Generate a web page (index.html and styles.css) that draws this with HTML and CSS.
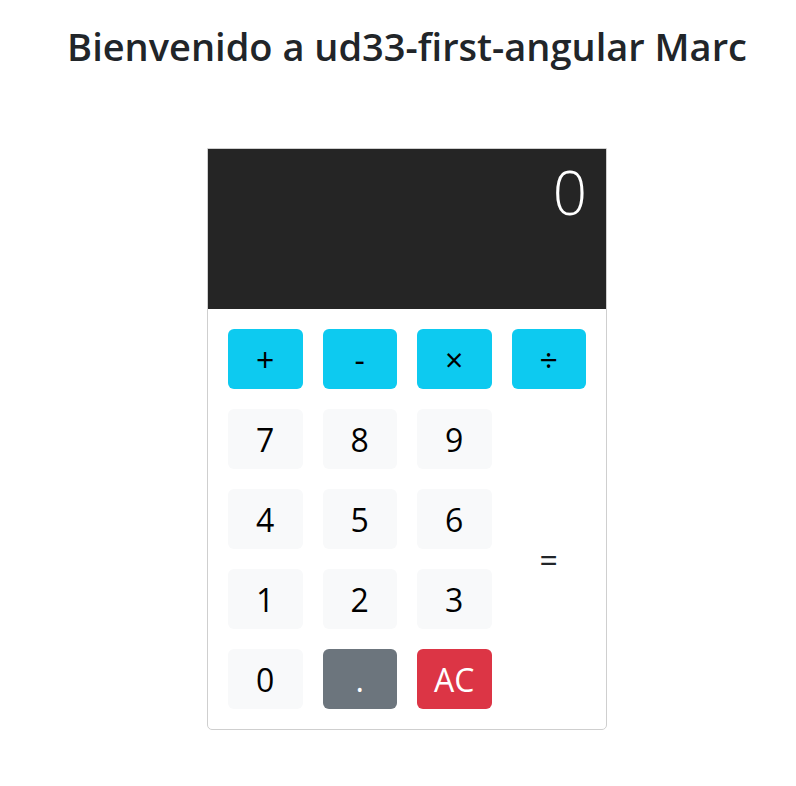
FILE: index.html
```html
<!DOCTYPE html>
<html lang="es">
<head>
<meta charset="utf-8">
<title>Ud33FirstAngular</title>
<link rel="stylesheet" href="styles.css">
</head>
<body>
<main class="page">
  <h1 class="title">Bienvenido a ud33-first-angular Marc</h1>
  <div class="calculator">
    <div class="display">0</div>
    <div class="keys">
      <button class="key key-op">+</button>
      <button class="key key-op">-</button>
      <button class="key key-op">×</button>
      <button class="key key-op">÷</button>
      <button class="key key-num">7</button>
      <button class="key key-num">8</button>
      <button class="key key-num">9</button>
      <button class="key key-equal">=</button>
      <button class="key key-num">4</button>
      <button class="key key-num">5</button>
      <button class="key key-num">6</button>
      <button class="key key-num">1</button>
      <button class="key key-num">2</button>
      <button class="key key-num">3</button>
      <button class="key key-num">0</button>
      <button class="key key-dot">.</button>
      <button class="key key-clear">AC</button>
    </div>
  </div>
</main>
</body>
</html>
```
FILE: styles.css
```css
* { box-sizing: border-box; }
html, body { margin: 0; padding: 0; background: #fff; }
body {
  font-family: "Open Sans", "Noto Sans", "Liberation Sans", sans-serif;
  color: #212529;
}
.page {
  display: flex;
  flex-direction: column;
  align-items: center;
  padding: 22px 0 0 18px;
}
.title {
  margin: 0;
  font-size: 38px;
  font-weight: 600;
  line-height: 48px;
  letter-spacing: 0;
  color: #212529;
}
.calculator {
  margin-top: 78px;
  width: 400px;
  border: 1px solid #cfcfcf;
  border-radius: 0 0 5px 5px;
  background: #fff;
}
.display {
  height: 160px;
  background: #252525;
  color: #fff;
  text-align: right;
  font-size: 60px;
  font-weight: 300;
  line-height: 72px;
  padding: 7px 19px 0 0;
}
.keys {
  display: grid;
  grid-template-columns: repeat(4, 1fr);
  grid-auto-rows: 60px;
  gap: 20px;
  padding: 20px;
}
.key {
  border: none;
  border-radius: 6px;
  font-family: inherit;
  font-size: 32px;
  line-height: 1;
  padding: 2px 0 0;
  color: #000;
  cursor: pointer;
}
.key-op { background: #0dcaf0; }
.key-num { background: #f8f9fa; }
.key-dot { background: #6c757d; color: #fff; }
.key-clear { background: #dc3545; color: #fff; }
.key-equal {
  background: transparent;
  grid-column: 4;
  grid-row: 2 / span 4;
  color: #212529;
}
```
